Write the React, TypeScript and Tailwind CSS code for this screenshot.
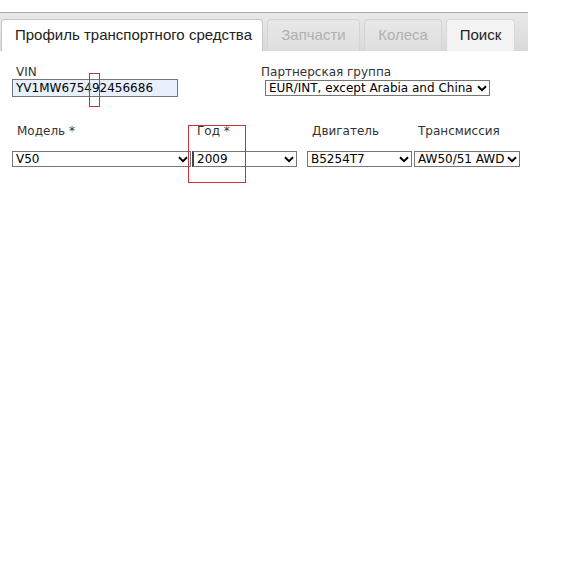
import React from "react";

const Chevron = () => (
  <svg width="10" height="7" viewBox="0 0 10 7" className="shrink-0">
    <path d="M1 1.2 L5 5.2 L9 1.2" fill="none" stroke="#000" strokeWidth="2" />
  </svg>
);

function Sel({ text, className }: { text: string; className: string }) {
  return (
    <div
      className={`flex items-center gap-[1px] border border-[#767676] bg-white h-[16px] pl-[3px] pr-[2px] overflow-hidden ${className}`}
    >
      <span className="flex-1 overflow-hidden whitespace-nowrap text-[12px] leading-[14px] text-black">{text}</span>
      <Chevron />
    </div>
  );
}

const tabFont = { fontFamily: '"Liberation Sans", Arial, sans-serif' };

export default function App() {
  return (
    <div
      className="relative w-[567px] h-[576px] bg-white text-[#222]"
      style={{ fontFamily: '"DejaVu Sans", Verdana, sans-serif' }}
    >
      <div className="pt-[12px]" style={tabFont}>
        <div className="w-[528px] h-[39px] border-t border-[#a9a9a9] bg-gradient-to-b from-[#e9e9e9] to-[#d9d9d9] flex items-end pl-[1px] gap-[4px]">
          <div className="h-[32px] w-[262px] bg-white border border-b-0 border-[#c8c8c8] rounded-t-[4px] flex items-center pl-[13px] whitespace-nowrap text-[15px] text-[#222]">
            Профиль транспортного средства
          </div>
          <div className="h-[32px] w-[93px] bg-gradient-to-b from-[#e8e8e8] to-[#dedede] border border-b-0 border-[#d4d4d4] rounded-t-[4px] flex items-center justify-center whitespace-nowrap text-[15px] text-[#b0b0b0]">
            Запчасти
          </div>
          <div className="h-[32px] w-[78px] bg-gradient-to-b from-[#e8e8e8] to-[#dedede] border border-b-0 border-[#d4d4d4] rounded-t-[4px] flex items-center justify-center whitespace-nowrap text-[15px] text-[#b0b0b0]">
            Колеса
          </div>
          <div className="h-[32px] w-[69px] bg-[#f3f3f3] border border-b-0 border-[#d8d8d8] rounded-t-[4px] flex items-center justify-center whitespace-nowrap text-[15px] text-[#222]">
            Поиск
          </div>
        </div>
      </div>

      <div className="flex mt-[14px]">
        <div className="ml-[12px] w-[249px] flex flex-col">
          <div className="pl-[4px] text-[12px] leading-[14px] text-[#333]">VIN</div>
          <div className="w-[166px] h-[18px] border border-[#767676] bg-[#e8f0fe] flex items-center pl-[3px] text-[12px] text-black">
            YV1MW675492456686
          </div>
        </div>
        <div className="flex flex-col">
          <div className="text-[12px] leading-[14px] text-[#333]">Партнерская группа</div>
          <Sel text="EUR/INT, except Arabia and China" className="ml-[4px] mt-[1px] w-[225px]" />
        </div>
      </div>

      <div className="flex mt-[27px] text-[12px] leading-[14px] text-[#333]">
        <div className="ml-[17px] w-[180px]">Модель *</div>
        <div className="w-[115px]">Год *</div>
        <div className="w-[106px]">Двигатель</div>
        <div>Трансмиссия</div>
      </div>

      <div className="flex mt-[13px] pl-[12px]">
        <Sel text="V50" className="w-[179px]" />
        <Sel text="2009" className="ml-[1px] w-[105px] border-l-[2px] border-l-[#444]" />
        <Sel text="B5254T7" className="ml-[10px] w-[105px]" />
        <Sel text="AW50/51 AWD" className="ml-[2px] w-[106px]" />
      </div>

      <div className="absolute left-[89px] top-[73px] w-[11px] h-[34px] border border-[#c8323c]" />
      <div className="absolute left-[188px] top-[125px] w-[58px] h-[58px] border border-[#c8323c]" />
    </div>
  );
}
